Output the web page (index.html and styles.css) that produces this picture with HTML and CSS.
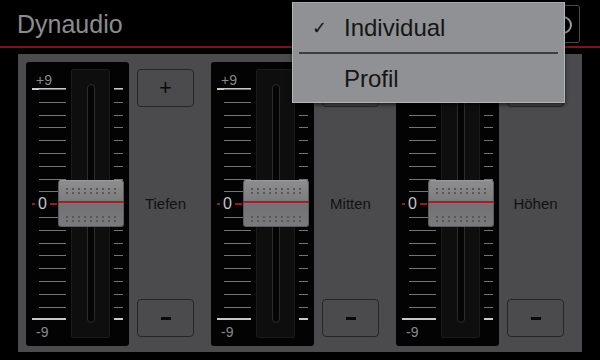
FILE: index.html
```html
<!DOCTYPE html>
<html lang="de">
<head>
  <meta charset="UTF-8">
  <title>Dynaudio</title>
  <link rel="stylesheet" href="styles.css">
</head>
<body>

  <div class="header">
    <h1 class="title">Dynaudio</h1>
    <div class="head-btn">
      <svg width="30" height="36" viewBox="0 0 30 36"><circle cx="16" cy="19" r="8" fill="none" stroke="#9a9a9a" stroke-width="2"/></svg>
    </div>
  </div>

  <div class="panel">

    <div class="band">
      <div class="slider">
        <span class="lbl-top">+9</span>
        <div class="end-l top"></div>
        <div class="ticks-l"></div>
        <div class="track"><div class="slot"></div></div>
        <div class="end-r top"></div>
        <div class="ticks-r"></div>
        <div class="end-l bottom"></div>
        <div class="end-r bottom"></div>
        <span class="lbl-bottom">-9</span>
        <div class="zero"><i class="dash"></i><span>0</span><i class="dash long"></i></div>
        <div class="knob"><div class="dots"></div><div class="redline"></div><div class="dots"></div></div>
      </div>
      <div class="side">
        <div class="btn">+</div>
        <div class="name">Tiefen</div>
        <div class="btn minus"><i></i></div>
      </div>
    </div>

    <div class="band">
      <div class="slider">
        <span class="lbl-top">+9</span>
        <div class="end-l top"></div>
        <div class="ticks-l"></div>
        <div class="track"><div class="slot"></div></div>
        <div class="end-r top"></div>
        <div class="ticks-r"></div>
        <div class="end-l bottom"></div>
        <div class="end-r bottom"></div>
        <span class="lbl-bottom">-9</span>
        <div class="zero"><i class="dash"></i><span>0</span><i class="dash long"></i></div>
        <div class="knob"><div class="dots"></div><div class="redline"></div><div class="dots"></div></div>
      </div>
      <div class="side">
        <div class="btn"></div>
        <div class="name">Mitten</div>
        <div class="btn minus"><i></i></div>
      </div>
    </div>

    <div class="band">
      <div class="slider">
        <span class="lbl-top">+9</span>
        <div class="end-l top"></div>
        <div class="ticks-l"></div>
        <div class="track"><div class="slot"></div></div>
        <div class="end-r top"></div>
        <div class="ticks-r"></div>
        <div class="end-l bottom"></div>
        <div class="end-r bottom"></div>
        <span class="lbl-bottom">-9</span>
        <div class="zero"><i class="dash"></i><span>0</span><i class="dash long"></i></div>
        <div class="knob"><div class="dots"></div><div class="redline"></div><div class="dots"></div></div>
      </div>
      <div class="side">
        <div class="btn"></div>
        <div class="name">Höhen</div>
        <div class="btn minus"><i></i></div>
      </div>
    </div>

  </div>

  <div class="menu">
    <div class="item"><span class="check">✓</span>Individual</div>
    <div class="sep"></div>
    <div class="item">Profil</div>
  </div>

</body>
</html>
```

FILE: styles.css
```css
body {
  margin: 0;
  width: 600px;
  height: 360px;
  background-color: #000;
  font-family: 'Liberation Sans', Arial, sans-serif;
  position: relative;
  overflow: hidden;
}

.header {
  height: 46px;
  border-bottom: 2px solid #7a1616;
  display: flex;
  justify-content: space-between;
  align-items: flex-start;
}
.title {
  margin: 0;
  padding: 12px 0 0 17px;
  font-size: 25px;
  line-height: 25px;
  font-weight: normal;
  color: #8c8c8c;
}
.head-btn {
  margin: 5px 20px 0 0;
  width: 32px;
  height: 36px;
  border: 1px solid #4a4a4a;
  border-radius: 3px;
}

.panel {
  margin: 6px 0 0 18px;
  width: 556px;
  height: 284px;
  padding: 8px 0 6px 8px;
  background-color: #4b4b4d;
  display: flex;
  gap: 17px;
}
.band {
  display: flex;
  gap: 8px;
}

/* slider box */
.slider {
  position: relative;
  width: 103px;
  height: 284px;
  background-color: #030303;
  border-radius: 3px;
}
.lbl-top, .lbl-bottom {
  position: absolute;
  left: 10px;
  font-size: 14px;
  line-height: 14px;
  color: #8a8a8a;
}
.lbl-top { top: 11px; }
.lbl-bottom { top: 263px; }

.ticks-l, .ticks-r {
  position: absolute;
  top: 27px;
  height: 232px;
  background: repeating-linear-gradient(to bottom, #747474 0 1px, transparent 1px 12.8px);
}
.ticks-l { left: 13px; width: 27px; }
.ticks-r { left: 88px; width: 9px; }

.end-l, .end-r {
  position: absolute;
  height: 2px;
  background-color: #c9c9c9;
}
.end-l { left: 6px; width: 34px; }
.end-r { left: 88px; width: 9px; }
.top { top: 26px; }
.bottom { top: 256px; }

.track {
  position: absolute;
  left: 45px;
  top: 7px;
  width: 37px;
  height: 267px;
  background-color: #0e0e0f;
  border: 1px solid #1b1b1c;
  border-radius: 2px;
}
.slot {
  margin: 14px auto 0;
  width: 6px;
  height: 237px;
  background-color: #050505;
  border: 1px solid #2c2c2d;
  border-radius: 4px;
}

.zero {
  position: absolute;
  left: 4px;
  top: 134px;
  width: 28px;
  height: 16px;
  background-color: #030303;
  display: flex;
  align-items: center;
  gap: 3px;
  color: #c4c4c4;
  font-size: 16px;
  line-height: 16px;
}
.zero .dash {
  width: 3px;
  height: 2px;
  margin-left: 2px;
  background-color: #8e1f1f;
}
.zero .dash.long {
  width: 7px;
  margin-left: 0;
}

.knob {
  position: absolute;
  left: 32px;
  top: 118px;
  width: 66px;
  height: 47px;
  box-sizing: border-box;
  border-radius: 3px;
  border: 1px solid #5c5c5e;
  border-top-color: #9a9a9c;
  background: linear-gradient(to bottom, #8d8d8f 0%, #7e7e80 40%, #737375 55%, #7a7a7c 100%);
  display: flex;
  flex-direction: column;
  align-items: center;
  padding-top: 6px;
}
.dots {
  width: 54px;
  height: 8px;
  background-image: radial-gradient(circle, #58585a 1px, transparent 1.4px);
  background-size: 6px 4px;
}
.redline {
  align-self: stretch;
  height: 2px;
  margin: 6px -1px 12px;
  background-color: #9b2323;
}

/* right side of each band */
.side {
  width: 57px;
  margin: 7px 0 9px;
  display: flex;
  flex-direction: column;
  justify-content: space-between;
  align-items: center;
}
.btn {
  width: 57px;
  height: 38px;
  box-sizing: border-box;
  border: 1px solid #262627;
  border-radius: 4px;
  display: flex;
  align-items: center;
  justify-content: center;
  font-size: 22px;
  color: #0a0a0a;
}
.btn.minus i {
  width: 10px;
  height: 3px;
  background-color: #0a0a0a;
}
.name {
  font-size: 15px;
  color: #111;
}

/* dropdown */
.menu {
  position: absolute;
  z-index: 5;
  left: 292px;
  top: 2px;
  width: 271px;
  height: 99px;
  background-color: #8f9194;
  border: 1px solid #b3b5b8;
  border-top-color: #a4a6a9;
  box-shadow: 0 2px 4px rgba(0, 0, 0, 0.6);
}
.item {
  position: relative;
  height: 49px;
  padding-left: 51px;
  display: flex;
  align-items: center;
  font-size: 24px;
  color: #151515;
}
.check {
  position: absolute;
  left: 19px;
  font-size: 18px;
}
.sep {
  margin: 0 6px;
  height: 2px;
  background-color: #3d3e40;
}
```
